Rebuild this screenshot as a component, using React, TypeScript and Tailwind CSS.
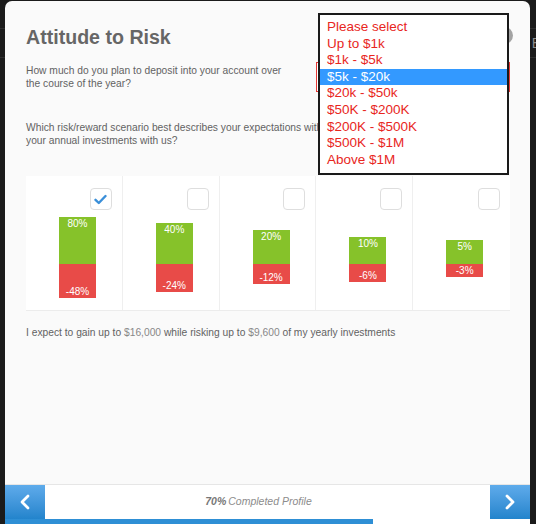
import React from 'react';

const options = [
  'Please select',
  'Up to $1k',
  '$1k - $5k',
  '$5k - $20k',
  '$20k - $50k',
  '$50K - $200K',
  '$200K - $500K',
  '$500K - $1M',
  'Above $1M',
];

const scenarios = [
  { gain: 80, loss: -48, up: 47, down: 34, checked: true },
  { gain: 40, loss: -24, up: 41, down: 28, checked: false },
  { gain: 20, loss: -12, up: 34, down: 20, checked: false },
  { gain: 10, loss: -6, up: 27, down: 18, checked: false },
  { gain: 5, loss: -3, up: 24, down: 13, checked: false },
];

const font = { fontFamily: '"Liberation Sans", Arial, sans-serif' };

function Checkbox({ checked }: { checked: boolean }) {
  return (
    <div className="w-[22px] h-[22px] rounded-[4px] border border-[#dedede] bg-white flex items-center justify-center">
      {checked && (
        <svg width="13" height="11" viewBox="0 0 13 11" fill="none">
          <path d="M1.5 5.8 L4.8 9 L11.5 2" stroke="#3a8fd9" strokeWidth="2.4" strokeLinecap="round" strokeLinejoin="round" />
        </svg>
      )}
    </div>
  );
}

function ScenarioCard({ s, last }: { s: (typeof scenarios)[number]; last: boolean }) {
  return (
    <div className={`flex flex-col bg-white pt-[12px] ${last ? '' : 'border-r border-[#efefef]'}`}>
      <div className="flex justify-end pr-[10px]">
        <Checkbox checked={s.checked} />
      </div>
      <div className="h-[54px] flex items-end pl-[33px]">
        <div
          className="w-[37px] bg-[#86c22a] text-white text-[10px] leading-[11px] text-center pt-[1px]"
          style={{ height: s.up }}
        >
          {s.gain}%
        </div>
      </div>
      <div className="flex items-start pl-[33px]">
        <div
          className="w-[37px] bg-[#e84b48] text-white text-[10px] leading-[11px] text-center flex items-end justify-center pb-[1px]"
          style={{ height: s.down }}
        >
          {s.loss}%
        </div>
      </div>
    </div>
  );
}

function Chevron({ dir }: { dir: 'left' | 'right' }) {
  return (
    <svg width="12" height="16" viewBox="0 0 12 16" fill="none">
      <path
        d={dir === 'left' ? 'M9 2 L3 8 L9 14' : 'M3 2 L9 8 L3 14'}
        stroke="white"
        strokeWidth="2.8"
        strokeLinecap="round"
        strokeLinejoin="round"
      />
    </svg>
  );
}

export default function App() {
  return (
    <div className="relative w-[536px] h-[524px] overflow-hidden bg-[#1b1b1b]" style={font}>
      {/* page behind the modal */}
      <div className="mt-[28px] h-[30px] border-y border-[#2e2e2e] flex items-center justify-end">
        <span className="text-[14px] text-[#8a8a8a] -mr-[5px]">B</span>
      </div>

      {/* modal */}
      <div className="absolute left-[5px] top-[1px] w-[525px] h-[526px] rounded-t-[7px] bg-[#fafafa] flex flex-col">
        <div className="flex-1 pl-[21px] pr-[20px] pt-[24px] text-[#626262]">
          <h1 className="text-[19.6px] leading-[24px] font-bold text-[#666]">Attitude to Risk</h1>

          <div className="mt-[13px] flex items-center justify-between">
            <p className="text-[10.25px] leading-[13px] w-[270px]">
              How much do you plan to deposit into your account over the course of the year?
            </p>
            <div className="w-[194px] h-[30px] border border-[#e53935] bg-white" />
          </div>

          <p className="mt-[29px] text-[10.25px] leading-[13px] w-[300px]">
            Which risk/reward scenario best describes your expectations with your annual investments with us?
          </p>

          <div className="mt-[29px] grid grid-cols-5 h-[135px] border-b border-[#ececec]">
            {scenarios.map((s, i) => (
              <ScenarioCard key={i} s={s} last={i === scenarios.length - 1} />
            ))}
          </div>

          <p className="mt-[15px] text-[10.25px] leading-[13px]">
            I expect to gain up to <span className="text-[#888]">$16,000</span> while risking up to{' '}
            <span className="text-[#888]">$9,600</span> of my yearly investments
          </p>
        </div>

        <div className="border-t border-[#e6e6e6] flex h-[35px]">
          <button className="w-[40px] h-full flex items-center justify-center bg-gradient-to-b from-[#5eabeb] to-[#2284cc]">
            <Chevron dir="left" />
          </button>
          <div className="flex-1 bg-white flex items-center justify-center pr-[18px] text-[10.5px] italic text-[#8c8c8c]">
            <span className="font-bold text-[#777] mr-[2px]">70%</span> Completed Profile
          </div>
          <button className="w-[40px] h-full flex items-center justify-center bg-gradient-to-b from-[#5eabeb] to-[#2284cc]">
            <Chevron dir="right" />
          </button>
        </div>
        <div className="h-[8px] bg-white">
          <div className="h-full w-[70%] bg-[#2e8fd5]" />
        </div>

        {/* close button, mostly hidden under the open list */}
        <div className="absolute top-[26px] left-[491px] w-[17px] h-[17px] rounded-full bg-[#a3a3a3]" />
      </div>

      {/* open select list */}
      <div className="absolute left-[318px] top-[13px] w-[191px] h-[162px] border-2 border-[#1a1a1a] bg-white pt-[4px]">
        {options.map((o) => (
          <div
            key={o}
            className={`pl-[7px] text-[13.5px] leading-[16.6px] ${
              o === '$5k - $20k' ? 'bg-[#3399ff] text-white' : 'text-[#e8261d]'
            }`}
          >
            {o}
          </div>
        ))}
      </div>
    </div>
  );
}
